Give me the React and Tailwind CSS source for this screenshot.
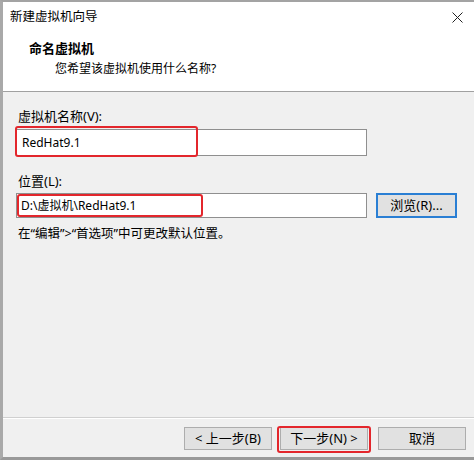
import React from 'react';

const font = { fontFamily: '"Noto Sans", "Noto Sans CJK SC", sans-serif' };

const RedBox = ({ className }) => (
  <div className={`pointer-events-none absolute rounded-[3px] border-2 border-[#e3262c] ${className}`} />
);

const Btn = ({ children, className = '' }) => (
  <button className={`h-[23px] w-[88px] border border-[#adadad] bg-[#e1e1e1] text-[13px] leading-none text-black ${className}`}>
    {children}
  </button>
);

const App = () => {
  return (
    <div
      style={font}
      className="flex h-[460px] w-[474px] flex-col border-t-2 border-b-[3px] border-l-[3px] border-t-[#a3a3a3] border-b-[#999999] border-l-[#a9a9a9] bg-white text-[12px] text-black"
    >
      {/* title bar */}
      <div className="flex h-[30px] items-center justify-between pl-[7px] pr-[11px]">
        <span className="text-[12.5px] leading-[16px]">新建虚拟机向导</span>
        <svg width="11" height="11" viewBox="0 0 11 11">
          <path d="M0.5 0.5 L10.5 10.5 M10.5 0.5 L0.5 10.5" stroke="#222" strokeWidth="1" fill="none" />
        </svg>
      </div>

      {/* header */}
      <div className="h-[60px] border-b border-[#a0a0a0] pl-[26px] pt-[8px]">
        <div className="text-[13px] font-bold leading-[16px]">命名虚拟机</div>
        <div className="mt-[5px] pl-[26px] leading-[16px]">您希望该虚拟机使用什么名称?</div>
      </div>

      {/* content */}
      <div className="flex-1 bg-[#f0f0f0] pl-[13px] pt-[16px]">
        <div className="pl-[2px] text-[13px] leading-[16px]">虚拟机名称(V):</div>
        <div className="relative mt-[5px] w-[351px]">
          <div className="flex h-[27px] items-center border border-[#8f8f8f] bg-white pl-[5px] leading-none">RedHat9.1</div>
          <RedBox className="-left-[1px] -top-[3px] h-[31px] w-[183px]" />
        </div>

        <div className="mt-[17px] pl-[2px] text-[13px] leading-[16px]">位置(L):</div>
        <div className="mt-[4px] flex items-center gap-[9px]">
          <div className="relative w-[351px]">
            <div className="flex h-[25px] items-center border border-[#8f8f8f] bg-white pl-[4px] leading-none">D:\虚拟机\RedHat9.1</div>
            <RedBox className="left-[1px] top-[1px] h-[23px] w-[186px]" />
          </div>
          <button className="h-[25px] w-[81px] border-2 border-[#2a7fd4] bg-[#e1e1e1] text-[13px] leading-none">浏览(R)...</button>
        </div>

        <div className="mt-[8px] pl-[2px] text-[12.5px] leading-[16px]">在“编辑”&gt;“首选项”中可更改默认位置。</div>
      </div>

      {/* footer */}
      <div className="border-t border-[#d0d0d0] bg-[#f0f0f0]">
        <div className="flex justify-end gap-[8px] border-t border-white pt-[8px] pb-[7px] pr-[8px]">
          <Btn>&lt; 上一步(B)</Btn>
          <div className="relative">
            <Btn>下一步(N) &gt;</Btn>
            <RedBox className="-left-[3px] -right-[3px] -top-[1px] -bottom-[3px]" />
          </div>
          <Btn className="ml-[2px]">取消</Btn>
        </div>
      </div>
    </div>
  );
};

export default App;
